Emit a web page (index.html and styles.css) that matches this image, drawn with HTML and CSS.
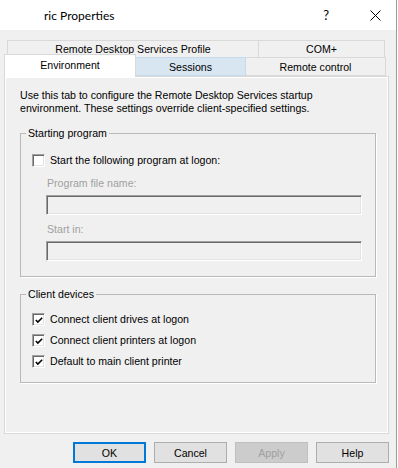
FILE: index.html
```html
<!DOCTYPE html>
<html lang="en">
<head>
    <meta charset="UTF-8">
    <meta name="viewport" content="width=device-width, initial-scale=1.0">
    <title>Generic Properties</title>
    <link rel="stylesheet" href="styles.css">
</head>
<body>
    <div class="window">
        <div class="titlebar">
            <span class="title">ric Properties</span>
            <span class="help">?</span>
            <svg class="close" width="11" height="11" viewBox="0 0 11 11">
                <path d="M0.5 0.5 L10.5 10.5 M10.5 0.5 L0.5 10.5" stroke="#000" stroke-width="1" fill="none"/>
            </svg>
        </div>
        <div class="dialog-body">
            <div class="tabs">
                <div class="tab-row back">
                    <div class="tab tab-profile">Remote Desktop Services Profile</div>
                    <div class="tab tab-com">COM+</div>
                </div>
                <div class="tab-row front">
                    <div class="tab tab-env selected">Environment</div>
                    <div class="tab tab-sessions hover">Sessions</div>
                    <div class="tab tab-remote">Remote control</div>
                </div>
            </div>
            <div class="panel">
                <p class="intro">Use this tab to configure the Remote Desktop Services startup<br>environment. These settings override client-specified settings.</p>

                <fieldset class="group group-start">
                    <legend>Starting program</legend>
                    <label class="check">
                        <span class="box"></span>
                        <span>Start the following program at logon:</span>
                    </label>
                    <div class="field-label">Program file name:</div>
                    <div class="textbox"></div>
                    <div class="field-label second">Start in:</div>
                    <div class="textbox"></div>
                </fieldset>

                <fieldset class="group group-devices">
                    <legend>Client devices</legend>
                    <label class="check">
                        <span class="box checked"><svg width="11" height="11" viewBox="0 0 11 11"><path d="M2 5 L4.2 7.3 L9 2.5" stroke="#000" stroke-width="1.7" fill="none"/></svg></span>
                        <span>Connect client drives at logon</span>
                    </label>
                    <label class="check">
                        <span class="box checked"><svg width="11" height="11" viewBox="0 0 11 11"><path d="M2 5 L4.2 7.3 L9 2.5" stroke="#000" stroke-width="1.7" fill="none"/></svg></span>
                        <span>Connect client printers at logon</span>
                    </label>
                    <label class="check">
                        <span class="box checked"><svg width="11" height="11" viewBox="0 0 11 11"><path d="M2 5 L4.2 7.3 L9 2.5" stroke="#000" stroke-width="1.7" fill="none"/></svg></span>
                        <span>Default to main client printer</span>
                    </label>
                </fieldset>
            </div>
            <div class="buttons">
                <button class="btn default">OK</button>
                <button class="btn">Cancel</button>
                <button class="btn" disabled>Apply</button>
                <button class="btn">Help</button>
            </div>
        </div>
    </div>
</body>
</html>
```
FILE: styles.css
```css
:root {
    --face-color: #f0f0f0;
    --tab-border: #d9d9d9;
    --group-border: #b9b9b9;
    --disabled-text: #a0a0a0;
    --shadow-dark: #a0a0a0;
    --shadow-darker: #696969;
    --accent-color: #0078d7;
}

* {
    margin: 0;
    padding: 0;
    box-sizing: border-box;
}

body {
    width: 398px;
    height: 468px;
    overflow: hidden;
    background-color: #ffffff;
    font-family: 'Liberation Sans', Arial, sans-serif;
    font-size: 10.6px;
    color: #000000;
}

.window {
    width: 397px;
    height: 468px;
    border-right: 1px solid #9c9c9c;
    background-color: var(--face-color);
}

/* title bar */
.titlebar {
    height: 30px;
    display: flex;
    align-items: center;
    padding-left: 44px;
    background-color: #ffffff;
}

.title {
    font-family: 'Segoe UI', Lato, sans-serif;
    font-size: 12px;
}

.help {
    margin-left: auto;
    font-family: 'Segoe UI', Lato, sans-serif;
    font-size: 13px;
}

.close {
    margin-left: 41px;
    margin-right: 15px;
}

/* body */
.dialog-body {
    padding: 10px 0 0 4px;
}

.tab-row {
    display: flex;
}

.tab {
    display: flex;
    align-items: center;
    justify-content: center;
    background-color: var(--face-color);
    border: 1px solid var(--tab-border);
    line-height: 13px;
}

.tab-row.back {
    height: 17px;
    margin-left: 3px;
}

.tab-row.back .tab {
    border-bottom: none;
    height: 17px;
}

.tab-profile {
    width: 252px;
}

.tab-com {
    width: 126px;
    border-left: none;
}

.tab-row.front {
    height: 19px;
    align-items: flex-end;
}

.tab-row.front .tab {
    height: 19px;
    padding-top: 1px;
}

.tab-env {
    width: 132px;
}

.tab-sessions {
    width: 110px;
    border-left: none;
}

.tab-remote {
    width: 140px;
    border-left: none;
}

.tab.selected {
    position: relative;
    z-index: 1;
    height: 23px !important;
    margin-bottom: -1px;
    padding-top: 0 !important;
    padding-bottom: 1px;
    background-color: #ffffff;
    border-bottom: none;
}

.tab.hover {
    background-color: #d8e6f2;
    border-color: #c7dbee;
}

/* tab page */
.panel {
    width: 385px;
    height: 358px;
    padding: 12px 12px 0 15px;
    border: 1px solid var(--tab-border);
    box-shadow: inset 0 0 0 1px #ffffff;
}

.intro {
    line-height: 13px;
}

.group {
    width: 356px;
    min-width: 0;
    margin-top: 12px;
    padding: 14px 12px 15px 11px;
    border: 1px solid var(--group-border);
    box-shadow: 1px 1px 0 #ffffff;
}

.group legend {
    margin-left: -6px;
    padding: 0 2px;
    line-height: 13px;
}

.group-devices {
    margin-top: 11px;
    padding-top: 12px;
    padding-bottom: 14px;
}

.check {
    display: flex;
    align-items: center;
    gap: 5px;
    height: 13px;
    line-height: 13px;
}

.check + .check {
    margin-top: 8px;
}

.box {
    width: 13px;
    height: 13px;
    display: flex;
    align-items: center;
    justify-content: center;
    background-color: #ffffff;
    border: 1px solid;
    border-color: var(--shadow-dark) #ffffff #ffffff var(--shadow-dark);
    box-shadow: inset 1px 1px 0 var(--shadow-darker), inset -1px -1px 0 #e3e3e3;
}

.box svg {
    margin: 1px 0 0 1px;
}

.field-label {
    margin: 10px 0 5px 15px;
    line-height: 13px;
    color: var(--disabled-text);
}

.field-label.second {
    margin-top: 8px;
}

.textbox {
    width: 316px;
    height: 20px;
    margin-left: 14px;
    background-color: var(--face-color);
    border: 1px solid;
    border-color: var(--shadow-dark) #ffffff #ffffff var(--shadow-dark);
    box-shadow: inset 1px 1px 0 var(--shadow-darker), inset -1px -1px 0 #e3e3e3;
}

/* buttons */
.buttons {
    width: 385px;
    display: flex;
    justify-content: flex-end;
    gap: 8px;
    margin-top: 8px;
}

.btn {
    width: 73px;
    height: 21px;
    font-family: inherit;
    font-size: 10.6px;
    color: #000000;
    background-color: #e1e1e1;
    border: 1px solid #adadad;
}

.btn.default {
    border: 2px solid var(--accent-color);
}

.btn:disabled {
    color: var(--disabled-text);
    background-color: #cccccc;
    border-color: #bfbfbf;
}
```
